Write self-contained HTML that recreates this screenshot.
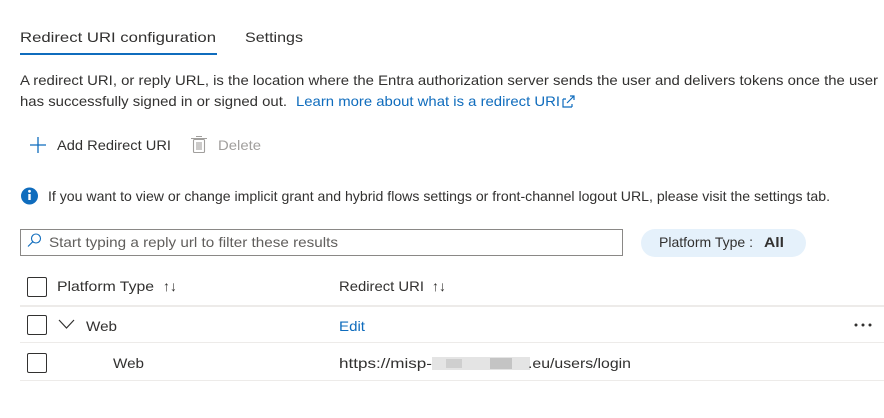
<!DOCTYPE html>
<html><head><meta charset="utf-8"><style>
html,body{margin:0;padding:0;background:#fff;width:884px;height:418px;overflow:hidden}
text{font-family:"Liberation Sans",sans-serif;font-size:14px;fill:#323130}
</style></head><body>
<svg width="884" height="418" viewBox="0 0 884 418" xmlns="http://www.w3.org/2000/svg">
<text x="20" y="42" font-size="15" textLength="196" lengthAdjust="spacingAndGlyphs">Redirect URI configuration</text>
<text x="245" y="42" font-size="15" textLength="58" lengthAdjust="spacingAndGlyphs">Settings</text>
<rect x="20" y="53" width="197" height="2" fill="#0f6cbd"/>
<text x="20" y="85" textLength="858" lengthAdjust="spacingAndGlyphs">A redirect URI, or reply URL, is the location where the Entra authorization server sends the user and delivers tokens once the user</text>
<text x="20" y="106" textLength="267" lengthAdjust="spacingAndGlyphs">has successfully signed in or signed out.</text>
<text x="296" y="106" style="fill:#0f6cbd" textLength="264" lengthAdjust="spacingAndGlyphs">Learn more about what is a redirect URI</text>
<g stroke="#0f6cbd" fill="none" stroke-width="1.2"><path d="M563 99v8h9"/><path d="M563 99h3M572 107v-3"/><path d="M567 103l7-7M570 96h4v4"/></g>
<g stroke="#0f6cbd" stroke-width="1.3"><path d="M38 137v16M30 145h16"/></g>
<text x="57" y="150" textLength="114" lengthAdjust="spacingAndGlyphs">Add Redirect URI</text>
<g stroke="#a19f9d" fill="none" stroke-width="1.1"><rect x="193.5" y="139.5" width="11" height="13" rx="1"/><path d="M191 138.5h16M196 136.5h6M197 142v8M199 142v8M201 142v8"/></g>
<text x="218" y="150" style="fill:#a19f9d" textLength="43" lengthAdjust="spacingAndGlyphs">Delete</text>
<circle cx="29.5" cy="196" r="8.5" fill="#0f6cbd"/>
<rect x="28.3" y="194" width="2.4" height="6" fill="#fff"/><circle cx="29.5" cy="191.3" r="1.4" fill="#fff"/>
<text x="48" y="201" font-size="13.5" textLength="782" lengthAdjust="spacingAndGlyphs">If you want to view or change implicit grant and hybrid flows settings or front-channel logout URL, please visit the settings tab.</text>
<rect x="20.5" y="229.5" width="602" height="26" fill="#fff" stroke="#8a8886"/>
<g stroke="#0f6cbd" fill="none" stroke-width="1.1"><circle cx="36" cy="238.5" r="4.5"/><path d="M32.8 241.7L28 246.5"/></g>
<text x="49" y="247" font-size="13.5" style="fill:#605e5c" textLength="289" lengthAdjust="spacingAndGlyphs">Start typing a reply url to filter these results</text>
<rect x="641" y="229" width="165" height="28" rx="14" fill="#e5f1fb"/>
<text x="659" y="247" font-size="13.5" textLength="94" lengthAdjust="spacingAndGlyphs">Platform Type :</text>
<text x="764" y="247" font-size="13.5" font-weight="bold" textLength="20" lengthAdjust="spacingAndGlyphs">All</text>
<rect x="27.5" y="277.5" width="19" height="19" rx="1.5" fill="none" stroke="#323130"/>
<text x="57" y="291" textLength="97" lengthAdjust="spacingAndGlyphs">Platform Type</text>
<text x="163" y="291" font-size="15">↑↓</text>
<text x="339" y="291" textLength="85" lengthAdjust="spacingAndGlyphs">Redirect URI</text>
<text x="432" y="291" font-size="15">↑↓</text>
<rect x="20" y="305" width="864" height="2" fill="#edebe9"/>
<rect x="27.5" y="315.5" width="19" height="19" rx="1.5" fill="none" stroke="#323130"/>
<path d="M59 320l7.5 8 7.5-8" fill="none" stroke="#323130" stroke-width="1.2"/>
<text x="86" y="331" textLength="31" lengthAdjust="spacingAndGlyphs">Web</text>
<text x="339" y="331" style="fill:#0f6cbd" textLength="26" lengthAdjust="spacingAndGlyphs">Edit</text>
<g fill="#323130"><circle cx="856" cy="325" r="1.5"/><circle cx="863" cy="325" r="1.5"/><circle cx="870" cy="325" r="1.5"/></g>
<rect x="20" y="342" width="864" height="1" fill="#edebe9"/>
<rect x="27.5" y="353.5" width="19" height="19" rx="1.5" fill="none" stroke="#323130"/>
<text x="113" y="368" textLength="31" lengthAdjust="spacingAndGlyphs">Web</text>
<text x="339" y="368" textLength="93" lengthAdjust="spacingAndGlyphs">https://misp-</text>
<rect x="432" y="357" width="98" height="13" fill="#e4e4e4"/>
<rect x="446" y="359" width="16" height="9" fill="#cfcfcf"/>
<rect x="490" y="358" width="22" height="11" fill="#c4c4c4"/>
<text x="528" y="368" textLength="103" lengthAdjust="spacingAndGlyphs">.eu/users/login</text>
<rect x="20" y="380" width="864" height="1" fill="#edebe9"/>
</svg>
</body></html>
